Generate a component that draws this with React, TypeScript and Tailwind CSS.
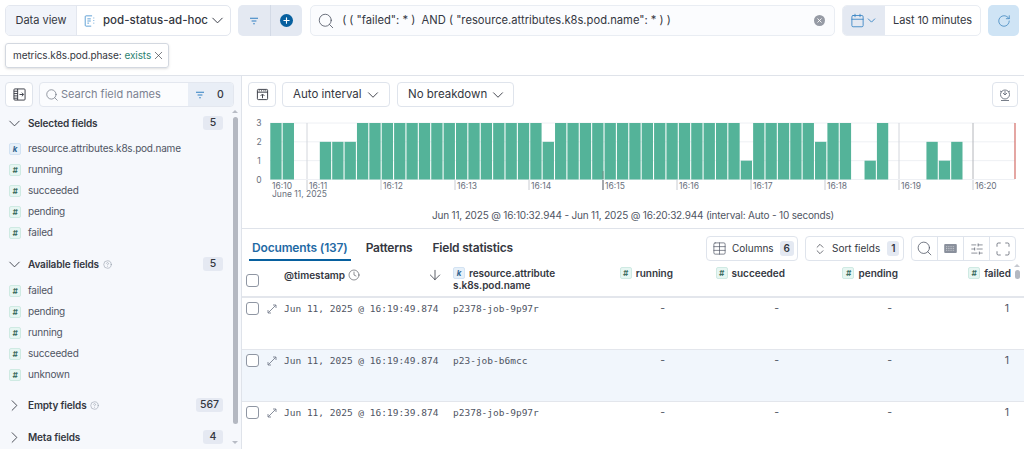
import {
  ArrowDown,
  Calendar,
  ChevronDown,
  ChevronRight,
  ChevronsUpDown,
  CircleHelp,
  Clock,
  Maximize,
  Plus,
  RotateCw,
  Search,
  SlidersHorizontal,
  Table,
  X,
} from "lucide-react";

const font = { fontFamily: "Inter, 'Liberation Sans', sans-serif" };

const bars = [
  3, 3, 0, 0, 2, 2, 2, 3, 3, 3, 3, 3, 3, 3, 3, 3, 3, 3, 3, 3, 3, 3, 2, 3, 3, 3, 3, 3, 3, 3,
  3, 3, 3, 3, 3, 3, 3, 3, 1, 3, 3, 3, 3, 3, 2, 3, 3, 0, 1, 3, 0, 0, 0, 2, 1, 2, 0, 0, 0, 0,
];

const FilterLines = ({ className }: { className?: string }) => (
  <svg viewBox="0 0 12 10" className={className} fill="none" stroke="currentColor" strokeWidth="1.3">
    <path d="M1 1.500h10M3 5h6M5 8.500h2" />
  </svg>
);

const FieldBadge = ({ type = "#" }: { type?: "#" | "k" }) => (
  <span
    className={`flex h-[12px] w-[12px] shrink-0 items-center justify-center rounded-[2px] border text-[8px] font-bold italic leading-none ${
      type === "k"
        ? "border-[#d3e3f3] bg-[#e6f0f9] text-[#31648f]"
        : "border-[#cfeae3] bg-[#e6f6f2] text-[#3f6f63]"
    }`}
  >
    {type}
  </span>
);

const CountBadge = ({ children }: { children: React.ReactNode }) => (
  <span className="ml-auto flex h-[14px] min-w-[20px] items-center justify-center rounded-[3px] bg-[#e5e9f2] px-[4px] text-[10.5px] font-medium text-[#343741]">
    {children}
  </span>
);

const SectionHead = ({
  label,
  count,
  open,
  help,
}: {
  label: string;
  count: number;
  open?: boolean;
  help?: boolean;
}) => (
  <div className="flex h-[16px] items-center pr-[8px]">
    <span className="flex w-[19px] justify-center">
      {open ? (
        <ChevronDown size={19} strokeWidth={1.1} className="text-[#343741]" />
      ) : (
        <ChevronRight size={19} strokeWidth={1.1} className="text-[#343741]" />
      )}
    </span>
    <span className="ml-[4px] text-[10px] font-semibold tracking-[-0.15px] text-[#343741]">{label}</span>
    {help && <CircleHelp size={9} strokeWidth={1.4} className="ml-[4px] text-[#8b93a3]" />}
    <CountBadge>{count}</CountBadge>
  </div>
);

const FieldRow = ({ name, type }: { name: string; type?: "#" | "k" }) => (
  <div className="flex h-[21px] items-center gap-[7px] pl-[9px]">
    <FieldBadge type={type} />
    <span className="text-[10px] tracking-[-0.2px] text-[#4f5563]">{name}</span>
  </div>
);

const Sidebar = () => (
  <aside className="flex w-[242px] shrink-0 flex-col border-r border-[#dfe3ea] bg-[#f6f8fc] pt-[6px]">
    <div className="flex h-[25px] items-center pl-[5px]">
      <button className="flex h-[25px] w-[28px] items-center justify-center rounded-[4px] border border-[#dfe4ec] bg-white">
        <svg viewBox="0 0 14 14" className="h-[13px] w-[13px] text-[#343741]" fill="none" stroke="currentColor">
          <rect x="1" y="1" width="12" height="12" rx="1" />
          <path d="M5 1v12M1 3.500h4M1 6h4M1 8.500h4M1 11h4M7 7h4M9.500 5l2 2-2 2" />
        </svg>
      </button>
      <div className="ml-[6px] flex h-[25px] w-[195px] items-center overflow-hidden rounded-[4px] border border-[#e3e7ef] bg-[#fbfcfe]">
        <Search size={14} strokeWidth={1.2} className="ml-[5px] text-[#69707d]" />
        <span className="ml-[2px] text-[11px] text-[#7b8291]">Search field names</span>
        <div className="ml-auto flex h-full w-[45px] items-center bg-[#e9eef6] pl-[7px]">
          <FilterLines className="h-[8px] w-[10px] text-[#2f7fc1]" />
          <span className="ml-[12px] text-[10.5px] font-medium text-[#343741]">0</span>
        </div>
      </div>
    </div>
    <div className="flex min-h-0 flex-1">
      <div className="min-w-0 flex-1 overflow-hidden pt-[8px]">
        <div className="pl-[5px]">
          <SectionHead label="Selected fields" count={5} open />
        </div>
        <div className="mt-[7px]">
          <FieldRow name="resource.attributes.k8s.pod.name" type="k" />
          <FieldRow name="running" />
          <FieldRow name="succeeded" />
          <FieldRow name="pending" />
          <FieldRow name="failed" />
        </div>
        <div className="mt-[13px] pl-[5px]">
          <SectionHead label="Available fields" count={5} open help />
        </div>
        <div className="mt-[8px]">
          <FieldRow name="failed" />
          <FieldRow name="pending" />
          <FieldRow name="running" />
          <FieldRow name="succeeded" />
          <FieldRow name="unknown" />
        </div>
        <div className="mt-[12px] pl-[5px]">
          <SectionHead label="Empty fields" count={567} help />
        </div>
        <div className="mt-[16px] pl-[5px]">
          <SectionHead label="Meta fields" count={4} />
        </div>
      </div>
      <div className="flex w-[10px] shrink-0 flex-col items-center pr-[2px] pt-[3px]">
        <span className="h-0 w-0 border-x-[3px] border-b-[3px] border-x-transparent border-b-[#b8bcc5]" />
        <span className="mt-[4px] h-[307px] w-[5px] shrink-0 rounded-full bg-[#b4b8c1]" />
        <span className="mt-[17px] h-0 w-0 border-x-[3px] border-t-[3px] border-x-transparent border-t-[#b8bcc5]" />
      </div>
    </div>
  </aside>
);

const Chart = () => {
  const x0 = 28.3;
  const pitch = 12.38;
  const step = 18.83;
  const base = 72.5;
  const yFor = (v: number) => base - v * step;
  const ticks = [
    { x: 65, t: "16:11", dark: false },
    { x: 139, t: "16:12", dark: false },
    { x: 213, t: "16:13", dark: false },
    { x: 287, t: "16:14", dark: false },
    { x: 361, t: "16:15", dark: true },
    { x: 435, t: "16:16", dark: false },
    { x: 509, t: "16:17", dark: false },
    { x: 583, t: "16:18", dark: false },
    { x: 657, t: "16:19", dark: false },
    { x: 731, t: "16:20", dark: false },
  ];
  return (
    <svg viewBox="0 0 782 98" className="block h-[98px] w-[782px]" style={font}>
      {[0, 1, 2, 3].map((v) => (
        <g key={v}>
          <line x1="28" x2="773" y1={yFor(v)} y2={yFor(v)} stroke="#eef0f4" />
          <text x="17" y={yFor(v) + 3} fontSize="8.5" fill="#69707d" textAnchor="middle">
            {v}
          </text>
        </g>
      ))}
      {bars.map((v, i) =>
        v ? (
          <rect key={i} x={x0 + i * pitch} y={yFor(v)} width={11.3} height={v * step} fill="#54b399" />
        ) : null
      )}
      <line x1="65" x2="65" y1="16" y2="72" stroke="#d3d6dc" />
      <line x1="657" x2="657" y1="16" y2="72" stroke="#d3d6dc" />
      <line x1="731" x2="731" y1="16" y2="72" stroke="#b4b6bb" />
      <line x1="773" x2="773" y1="16" y2="72" stroke="#d36c66" strokeWidth="1.2" />
      <line x1="361" x2="361" y1="64" y2="72" stroke="#6b8f84" />
      <text x="30" y="82" fontSize="8.5" fill="#69707d">16:10</text>
      <text x="30" y="90" fontSize="8.5" fill="#69707d">June 11, 2025</text>
      {ticks.map((k) => (
        <g key={k.t}>
          <line
            x1={k.x}
            x2={k.x}
            y1="73"
            y2="83"
            stroke={k.dark ? "#6b6f77" : "#c9ccd2"}
            strokeWidth={k.dark ? 1.2 : 1}
          />
          <text x={k.x + 2} y="82" fontSize="8.5" fill="#69707d">
            {k.t}
          </text>
        </g>
      ))}
    </svg>
  );
};

const cols = "grid grid-cols-[42px_169px_167px_55px_112px_113px_113px] items-start";
const cell = "text-right text-[10.5px] leading-[13px] text-[#4f5563]";
const mono = "font-['DejaVu_Sans_Mono',monospace] text-[9.5px] leading-[13px] text-[#4f5563] whitespace-nowrap";

const Row = ({ time, pod, tint }: { time: string; pod: string; tint?: boolean }) => (
  <div className={`${cols} h-[52px] border-b border-[#e3e6ec] pt-[4px] ${tint ? "bg-[#f1f6fc]" : "bg-white"}`}>
    <div className="flex items-center pl-[4px]">
      <span className="h-[13px] w-[13px] rounded-[3px] border border-[#8f96a3] bg-white" />
      <svg viewBox="0 0 10 10" className="ml-[8px] h-[10px] w-[10px] text-[#7b8291]" fill="none" stroke="currentColor" strokeWidth="0.9">
        <path d="M1 9l8-8M1 6v3h3M6 1h3v3" />
      </svg>
    </div>
    <div className={mono}>{time}</div>
    <div className={mono}>{pod}</div>
    <div className={`${cell} pr-[10px]`}>-</div>
    <div className={`${cell} pr-[8px]`}>-</div>
    <div className={`${cell} pr-[8px]`}>-</div>
    <div className={`${cell} pr-[4px]`}>1</div>
  </div>
);

const HeadCell = ({ label }: { label: string }) => (
  <div className="flex items-center justify-end gap-[4px] pr-[2px] text-[10px] font-semibold leading-[12px] text-[#343741]">
    <FieldBadge />
    <span>{label}</span>
  </div>
);

export default function App() {
  return (
    <div className="flex h-[449px] w-[1024px] flex-col overflow-hidden bg-white text-[#343741]" style={font}>
      <header className="h-[76px] shrink-0 border-b border-[#dfe3ea] px-[5px] pt-[5px]">
        <div className="flex h-[31px] items-stretch">
          <div className="flex w-[226px] overflow-hidden rounded-[5px] border border-[#e3e7ef]">
            <span className="flex w-[71px] items-center justify-center border-r border-[#e3e7ef] bg-[#f1f4fa] text-[11px]">
              Data view
            </span>
            <span className="flex flex-1 items-center pl-[7px]">
              <svg viewBox="0 0 12 14" className="h-[12px] w-[11px] shrink-0 text-[#4a93cf]" fill="none" stroke="currentColor">
                <path d="M9 1H2a1 1 0 0 0-1 1v10a1 1 0 0 0 1 1h6M3.500 4.500h4M3.500 7h4M3.500 9.500h2M11 3v1M11 6v1M11 9v1" />
              </svg>
              <span className="ml-[8px] whitespace-nowrap text-[11.5px] font-medium">pod-status-ad-hoc</span>
              <ChevronDown size={19} strokeWidth={1.2} className="ml-auto mr-[3px] shrink-0" />
            </span>
          </div>
          <div className="ml-[7px] flex w-[64px] overflow-hidden rounded-[5px] bg-[#e4e9f2]">
            <span className="flex flex-1 items-center justify-center border-r border-[#d3dae6]">
              <FilterLines className="h-[8px] w-[10px] text-[#2f7fc1]" />
            </span>
            <span className="flex flex-1 items-center justify-center">
              <span className="flex h-[13px] w-[13px] items-center justify-center rounded-full bg-[#07609f]">
                <Plus size={9} strokeWidth={3} className="text-white" />
              </span>
            </span>
          </div>
          <div className="ml-[8px] flex w-[525px] items-center rounded-[5px] border border-[#e9edf3] bg-[#fbfcfe] pl-[6px] pr-[9px]">
            <Search size={18} strokeWidth={1.1} className="text-[#4f5563]" />
            <span className="ml-[4px] whitespace-pre text-[11.2px] text-[#343741]">
              {' ( ( "failed": * )  AND ( "resource.attributes.k8s.pod.name": * ) )'}
            </span>
            <span className="ml-auto flex h-[11px] w-[11px] items-center justify-center rounded-full bg-[#969ba5]">
              <X size={7} strokeWidth={3} className="text-white" />
            </span>
          </div>
          <div className="ml-[7px] flex w-[139px] overflow-hidden rounded-[5px] border border-[#e9edf3]">
            <span className="flex w-[42px] items-center justify-center bg-[#e4e9f2] text-[#2f7fc1]">
              <Calendar size={15} strokeWidth={1.3} />
              <ChevronDown size={13} strokeWidth={1.6} />
            </span>
            <span className="flex flex-1 items-center justify-center text-[11px] tracking-[-0.1px]">Last 10 minutes</span>
          </div>
          <div className="ml-[7px] flex w-[31px] items-center justify-center rounded-[5px] bg-[#cfe4f5] text-[#3a83bd]">
            <RotateCw size={14} strokeWidth={1.3} />
          </div>
        </div>
        <div className="mt-[7px] flex h-[25px] w-[164px] items-center rounded-[3px] border border-[#d3d8e0] pl-[7px] text-[10px] tracking-[-0.1px] shadow-sm">
          <span className="whitespace-nowrap">metrics.k8s.pod.phase:</span>
          <span className="ml-[3px] text-[#2c8271]">exists</span>
          <X size={13} strokeWidth={1.2} className="ml-[1px] shrink-0" />
        </div>
      </header>

      <div className="flex min-h-0 flex-1">
        <Sidebar />
        <main className="min-w-0 flex-1 pt-[6px]">
          <div className="flex h-[25px] items-stretch pl-[6px] pr-[6px]">
            <span className="flex w-[28px] items-center justify-center rounded-[4px] border border-[#dfe4ec]">
              <svg viewBox="0 0 14 14" className="h-[13px] w-[13px]" fill="none" stroke="currentColor">
                <rect x="1.500" y="1.500" width="11" height="11" rx="1" />
                <path d="M1.500 4.500h11M7 11V7M5 8.500L7 6.500l2 2M3 3h1M5.500 3h1M8 3h1M10 3h1" />
              </svg>
            </span>
            <span className="ml-[6px] flex w-[108px] items-center justify-between rounded-[4px] border border-[#dfe4ec] pl-[10px] pr-[7px] text-[11.5px]">
              Auto interval
              <ChevronDown size={18} strokeWidth={1.2} />
            </span>
            <span className="ml-[7px] flex w-[117px] items-center justify-between rounded-[4px] border border-[#dfe4ec] pl-[10px] pr-[6px] text-[11.5px]">
              No breakdown
              <ChevronDown size={18} strokeWidth={1.2} />
            </span>
            <span className="ml-auto flex w-[26px] items-center justify-center rounded-[4px] border border-[#dfe4ec]">
              <svg viewBox="0 0 14 14" className="h-[14px] w-[14px] text-[#69707d]" fill="none" stroke="currentColor" strokeWidth="0.9">
                <circle cx="7" cy="6.500" r="4.500" />
                <path d="M3 12.500h8M5 5l2 2 2-2M7 7V3M2 3l2 1M12 3l-2 1" />
              </svg>
            </span>
          </div>
          <Chart />
          <div className="mt-[3px] flex h-[15px] items-center justify-center whitespace-nowrap text-[10px] tracking-[-0.18px] text-[#4f5563]">
            Jun 11, 2025 @ 16:10:32.944 - Jun 11, 2025 @ 16:20:32.944 (interval: Auto - 10 seconds)
          </div>
          <div className="mt-[5px] border-t border-[#dfe3ea]" />

          <div className="flex h-[33px] items-start pl-[7px] pr-[8px] pt-[7px]">
            <div className="flex h-[25px] whitespace-nowrap border-b-2 border-[#07609f] px-[3px] pt-[3px] text-[12px] font-semibold tracking-[-0.15px] text-[#1f6aa5]">
              Documents (137)
            </div>
            <div className="ml-[15px] pt-[3px] text-[12px] font-semibold tracking-[-0.2px]">Patterns</div>
            <div className="ml-[20px] whitespace-nowrap pt-[3px] text-[12px] font-semibold tracking-[-0.2px]">
              Field statistics
            </div>
            <div className="ml-auto flex h-[25px] w-[92px] items-center rounded-[4px] border border-[#dfe4ec] pl-[5px] text-[10px]">
              <Table size={15} strokeWidth={1.1} className="text-[#4f5563]" />
              <span className="ml-[5px]">Columns</span>
              <span className="ml-[6px] rounded-[3px] bg-[#e4e9f2] px-[4px] text-[10px] font-semibold">6</span>
            </div>
            <div className="ml-[7px] flex h-[25px] w-[99px] items-center rounded-[4px] border border-[#dfe4ec] pl-[7px] text-[10px]">
              <ChevronsUpDown size={14} strokeWidth={1.2} />
              <span className="ml-[5px] whitespace-nowrap">Sort fields</span>
              <span className="ml-[7px] rounded-[3px] bg-[#e4e9f2] px-[4px] text-[10px] font-semibold">1</span>
            </div>
            <div className="ml-[7px] flex h-[25px] w-[105px] items-stretch rounded-[4px] border border-[#dfe4ec] text-[#4f5563]">
              <span className="flex flex-1 items-center justify-center border-r border-[#dfe4ec]">
                <Search size={17} strokeWidth={1.1} />
              </span>
              <span className="flex flex-1 items-center justify-center border-r border-[#dfe4ec]">
                <svg viewBox="0 0 14 10" className="h-[9px] w-[13px] text-[#8a909c]" fill="currentColor">
                  <rect x="0" y="0" width="14" height="10" rx="1" />
                  <path d="M2 3h10M2 5h10M2 7h10" stroke="#fff" strokeWidth="0.6" strokeDasharray="1 1" />
                </svg>
              </span>
              <span className="flex flex-1 items-center justify-center border-r border-[#dfe4ec]">
                <SlidersHorizontal size={14} strokeWidth={1.1} />
              </span>
              <span className="flex flex-1 items-center justify-center">
                <Maximize size={16} strokeWidth={1.1} />
              </span>
            </div>
          </div>

          <div className={`${cols} relative h-[36px] border-b-2 border-[#e3e6ec] pt-[5px]`}>
            <div className="pl-[4px] pt-[7px]">
              <span className="block h-[13px] w-[13px] rounded-[3px] border border-[#8f96a3]" />
            </div>
            <div className="flex items-center justify-between pr-[10px] text-[10px] font-semibold leading-[12px]">
              <span className="flex items-center gap-[3px]">
                @timestamp
                <Clock size={12} strokeWidth={1.1} />
              </span>
              <ArrowDown size={16} strokeWidth={1.2} />
            </div>
            <div className="text-[10px] font-semibold leading-[12px] tracking-[-0.05px]">
              <div className="flex items-center gap-[4px]">
                <FieldBadge type="k" />
                resource.attribute
              </div>
              <div>s.k8s.pod.name</div>
            </div>
            <HeadCell label="running" />
            <HeadCell label="succeeded" />
            <HeadCell label="pending" />
            <HeadCell label="failed" />
            <div className="absolute right-[4px] top-[2px] flex flex-col items-center">
              <span className="h-0 w-0 border-x-[3px] border-b-[3px] border-x-transparent border-b-[#c6c9d0]" />
              <span className="mt-[3px] h-[9px] w-[5px] rounded-full bg-[#b4b8c1]" />
            </div>
          </div>
          <Row time="Jun 11, 2025 @ 16:19:49.874" pod="p2378-job-9p97r" />
          <Row time="Jun 11, 2025 @ 16:19:49.874" pod="p23-job-b6mcc" tint />
          <Row time="Jun 11, 2025 @ 16:19:39.874" pod="p2378-job-9p97r" />
        </main>
      </div>
    </div>
  );
}
